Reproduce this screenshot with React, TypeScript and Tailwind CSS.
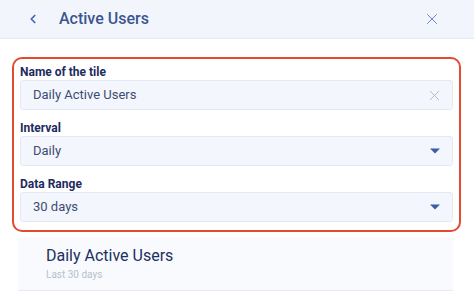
import { ChevronLeft, X } from "lucide-react";

function Caret() {
  return (
    <svg width="10" height="6" viewBox="0 0 10 6" className="shrink-0">
      <path d="M0 0.5h10L5 5.5z" fill="#3d5ca8" />
    </svg>
  );
}

function Field({
  label,
  value,
  kind,
}: {
  label: string;
  value: string;
  kind: "clear" | "select";
}) {
  return (
    <div className="flex flex-col">
      <div className="h-[16px] text-[12px] leading-[16px] font-bold text-[#1d2b5e]">{label}</div>
      <div className="flex h-[30px] items-center justify-between rounded-[3px] border border-[#e2e9f4] bg-[#f3f7fd] pl-[12px] pr-[9px]">
        <span className="text-[13px] text-[#3d4c72]">{value}</span>
        {kind === "clear" ? (
          <X className="h-[17px] w-[17px] text-[#aab3c3]" strokeWidth={1.2} />
        ) : (
          <span className="pr-[3px]">
            <Caret />
          </span>
        )}
      </div>
    </div>
  );
}

export default function App() {
  return (
    <div className="h-[297px] w-[474px] overflow-hidden bg-white font-['Roboto',sans-serif]">
      {/* Header */}
      <div className="flex h-[39px] items-center border-b border-[#e3eaf4] bg-[#f2f6fc] pl-[26px] pr-[33px]">
        <ChevronLeft className="h-[14px] w-[14px] text-[#3d68b5]" strokeWidth={3} />
        <span className="ml-[19px] text-[16px] font-medium text-[#3a5590]">Active Users</span>
        <X className="ml-auto h-[18px] w-[18px] text-[#6a86bf]" strokeWidth={1.3} />
      </div>

      <div className="px-[12px] pt-[18px]">
        {/* Highlighted form */}
        <div className="mr-[1px] flex flex-col gap-[10px] rounded-[10px] border-2 border-[#e24b30] px-[6px] pt-[5px] pb-[8px]">
          <Field label="Name of the tile" value="Daily Active Users" kind="clear" />
          <Field label="Interval" value="Daily" kind="select" />
          <Field label="Data Range" value="30 days" kind="select" />
        </div>

        {/* Preview tile */}
        <div className="mt-[5px] ml-[6px] mr-[9px] flex h-[54px] flex-col justify-center border-b border-[#e6ecf5] bg-[#f8fafd] pl-[28px]">
          <div className="text-[16px] leading-[20px] text-[#22305f]">Daily Active Users</div>
          <div className="mt-[3px] text-[10px] leading-[12px] text-[#b6bfcc]">Last 30 days</div>
        </div>
      </div>
    </div>
  );
}
